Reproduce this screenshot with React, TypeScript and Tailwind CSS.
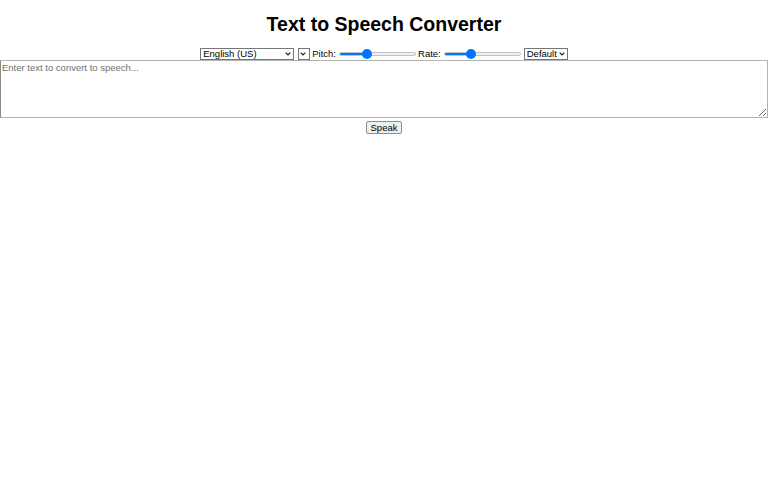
import { useState } from "react";

const voices = ["English (US)", "English (UK)", "Español", "Français", "Deutsch"];

function Chevron() {
  return (
    <svg
      width="6"
      height="4"
      viewBox="0 0 6 4"
      className="pointer-events-none absolute right-[3px] top-1/2 -translate-y-1/2"
    >
      <path d="M0.7 0.7 L3 3 L5.3 0.7" fill="none" stroke="#222" strokeWidth="1.2" />
    </svg>
  );
}

function Dropdown({
  options,
  className,
}: {
  options: string[];
  className: string;
}) {
  return (
    <div className={`relative h-[12px] ${className}`}>
      <select className="h-full w-full appearance-none border border-[#767676] bg-white pl-[2px] pr-[8px] text-[9.5px] leading-[10px] outline-none">
        {options.map((o) => (
          <option key={o}>{o}</option>
        ))}
      </select>
      <Chevron />
    </div>
  );
}

function Slider({
  value,
  onChange,
  className,
}: {
  value: number;
  onChange: (v: number) => void;
  className: string;
}) {
  const min = 0.5;
  const max = 2;
  const pct = ((value - min) / (max - min)) * 100;
  return (
    <input
      type="range"
      min={min}
      max={max}
      step={0.1}
      value={value}
      onChange={(e) => onChange(Number(e.target.value))}
      style={{
        background: `linear-gradient(to right, #0075ff 0%, #0075ff ${pct}%, #efefef ${pct}%, #efefef 100%)`,
      }}
      className={`h-[4px] w-[77px] cursor-pointer appearance-none rounded-full border border-[#c4c4c4] outline-none [&::-webkit-slider-thumb]:h-[10px] [&::-webkit-slider-thumb]:w-[10px] [&::-webkit-slider-thumb]:appearance-none [&::-webkit-slider-thumb]:rounded-full [&::-webkit-slider-thumb]:bg-[#0075ff] ${className}`}
    />
  );
}

export default function App() {
  const [text, setText] = useState("");
  const [pitch, setPitch] = useState(1);
  const [rate, setRate] = useState(1);

  return (
    <div className="min-h-screen bg-white text-black font-['Liberation_Sans',Arial,sans-serif]">
      <h1 className="pt-[13px] text-center text-[19.5px] font-bold leading-[23px]">
        Text to Speech Converter
      </h1>

      <div className="mt-[12px] flex h-[12px] items-center justify-center text-[9.5px] leading-[12px]">
        <Dropdown options={voices} className="w-[94px]" />
        <Dropdown options={[""]} className="ml-[4px] w-[11px]" />
        <span className="ml-[3px]">Pitch:</span>
        <Slider value={pitch} onChange={setPitch} className="ml-[3px]" />
        <span className="ml-[2px]">Rate:</span>
        <Slider value={rate} onChange={setRate} className="ml-[3px]" />
        <Dropdown options={["Default"]} className="ml-[3px] w-[44px]" />
      </div>

      <textarea
        value={text}
        onChange={(e) => setText(e.target.value)}
        placeholder="Enter text to convert to speech..."
        className="block h-[58px] w-full border border-[#b4b4b4] border-l-[#8a8a8a] bg-white px-[1px] py-[1px] text-[9.5px] leading-[12px] outline-none placeholder:text-[#6f6f6f]"
      />

      <div className="mt-[3px] flex justify-center">
        <button className="h-[13px] rounded-[2px] border border-[#8f8f8f] bg-[#efefef] px-[4px] text-[9.5px] leading-[11px]">
          Speak
        </button>
      </div>
    </div>
  );
}
